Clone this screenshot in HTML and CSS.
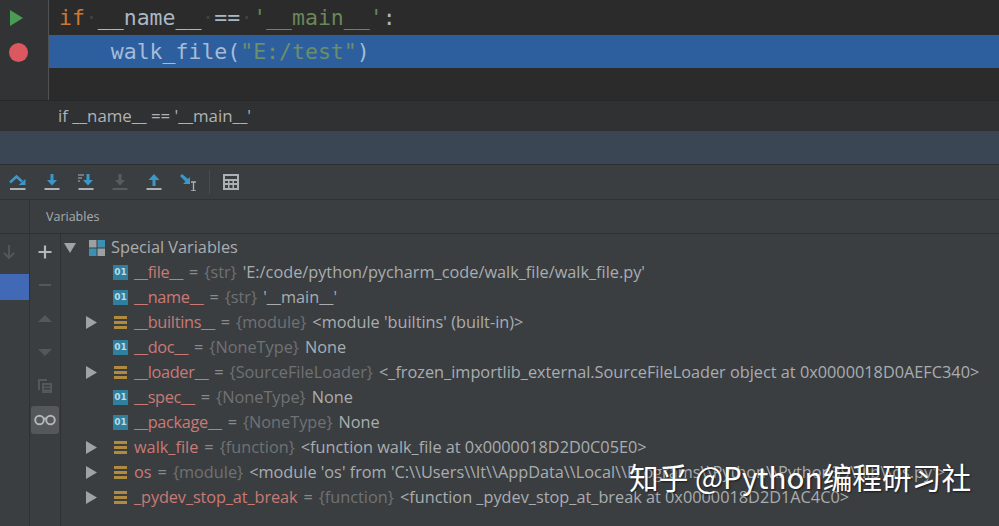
FILE: index.html
```html
<!DOCTYPE html>
<html lang="zh">
<head>
<meta charset="utf-8">
<title>PyCharm debugger</title>
<link rel="stylesheet" href="styles.css">
</head>
<body>
<div class="app">
  <section class="editor">
    <div class="gutter">
      <div class="gut-row"><svg width="16" height="18" viewBox="0 0 16 18"><path d="M1 1 L14 9 L1 17 Z" fill="#499c54"/></svg></div>
      <div class="gut-row"><span class="bp"></span></div>
    </div>
    <div class="code">
      <div class="line"><span class="kw">if</span><span class="ws">·</span>__name__<span class="ws">·</span>==<span class="ws">·</span><span class="str">'__main__'</span>:</div>
      <div class="line current">    walk_file(<span class="str2">"E:/test"</span>)</div>
    </div>
  </section>
  <div class="crumb">if __name__ == '__main__'</div>
  <div class="band"></div>
  <div class="toolbar">
    <svg class="tb" width="18" height="18" viewBox="0 0 18 18"><path d="M1 9.500 L7.500 3.500 L13 8.500" fill="none" stroke="#3b97c8" stroke-width="2.600"/><path d="M9.500 12 H16.500 V6 Z" fill="#3b97c8"/><rect x="1" y="15" width="15.500" height="2" fill="#aeb1b3"/></svg>
    <svg class="tb" width="18" height="18" viewBox="0 0 18 18"><path d="M7.500 1 H10.500 V7 H14 L9 12.500 L4 7 H7.500 Z" fill="#3b97c8"/><rect x="1.500" y="15" width="15" height="2" fill="#aeb1b3"/></svg>
    <svg class="tb" width="18" height="18" viewBox="0 0 18 18"><path d="M9.500 1 H12.500 V7 H16 L11 12.500 L6 7 H9.500 Z" fill="#3b97c8"/><path d="M1 2 H7 M1 5 H5 M1 8 H3" stroke="#aeb1b3" stroke-width="1.200"/><rect x="1.500" y="15" width="15" height="2" fill="#aeb1b3"/></svg>
    <svg class="tb" width="18" height="18" viewBox="0 0 18 18"><path d="M7.500 1 H10.500 V7 H14 L9 12.500 L4 7 H7.500 Z" fill="#595c5e"/><rect x="1.500" y="15" width="15" height="2" fill="#595c5e"/></svg>
    <svg class="tb" width="18" height="18" viewBox="0 0 18 18"><path d="M7.500 13 H10.500 V7 H14.500 L9 1 L3.500 7 H7.500 Z" fill="#3b97c8"/><rect x="1.500" y="15" width="15" height="2" fill="#aeb1b3"/></svg>
    <svg class="tb" width="18" height="18" viewBox="0 0 18 18"><path d="M1 3 L3 1 L9 6 L11 4 V11 H4 L6.500 8.500 Z" fill="#3b97c8"/><path d="M12 9 H17 M12 18 H17 M14.500 9 V18" stroke="#aeb1b3" stroke-width="1.300"/></svg>
    <span class="tb-sep"></span>
    <svg class="tb" width="16" height="16" viewBox="0 0 16 16"><path fill-rule="evenodd" d="M0 0 H16 V16 H0 Z M2 2 V5 H14 V2 Z M2 7 V9 H5 V7 Z M6.500 7 V9 H9.500 V7 Z M11 7 V9 H14 V7 Z M2 11 V14 H5 V11 Z M6.500 11 V14 H9.500 V11 Z M11 11 V14 H14 V11 Z" fill="#aeb1b3"/></svg>
  </div>
  <div class="tabs">
    <div class="tabs-left"></div>
    <div class="tab-title">Variables</div>
  </div>
  <div class="debug">
    <aside class="frames">
      <div class="frame-arrow"><svg width="14" height="16" viewBox="0 0 14 16"><path d="M7 1 V14 M2 9 L7 14 L12 9" fill="none" stroke="#55585a" stroke-width="1.800"/></svg></div>
      <div class="frame-sel"></div>
    </aside>
    <aside class="actions">
      <div class="act"><svg width="14" height="14" viewBox="0 0 14 14"><path d="M7 0.500 V13.500 M0.500 7 H13.500" stroke="#b4b7b9" stroke-width="2.200"/></svg></div>
      <div class="act"><svg width="14" height="14" viewBox="0 0 14 14"><path d="M1 7 H13" stroke="#55585a" stroke-width="2"/></svg></div>
      <div class="act"><svg width="14" height="10" viewBox="0 0 14 10"><path d="M7 1 L14 8 H0 Z" fill="#55585a"/></svg></div>
      <div class="act"><svg width="14" height="10" viewBox="0 0 14 10"><path d="M0 2 H14 L7 9 Z" fill="#55585a"/></svg></div>
      <div class="act"><svg width="16" height="16" viewBox="0 0 16 16"><path d="M1 1 H10 V3 H3 V12 H1 Z" fill="#55585a"/><path fill-rule="evenodd" d="M5 5 H15 V15 H5 Z M7 7 V8.500 H13 V7 Z M7 10 V11.500 H13 V10 Z" fill="#55585a"/></svg></div>
      <div class="act on"><svg width="22" height="12" viewBox="0 0 22 12"><circle cx="5.500" cy="6" r="4.300" fill="none" stroke="#b4b7b9" stroke-width="1.900"/><circle cx="16.500" cy="6" r="4.300" fill="none" stroke="#b4b7b9" stroke-width="1.900"/><path d="M9 4.500 H13" stroke="#b4b7b9" stroke-width="1.900"/></svg></div>
    </aside>
    <div class="tree">
      <div class="row top"><svg class="tw" width="12" height="12" viewBox="0 0 12 12"><path d="M0 1 H12 L6 11 Z" fill="#a0a3a5"/></svg><svg class="grid" width="16" height="16" viewBox="0 0 16 16"><rect width="7.500" height="7.500" fill="#9ba0a3"/><rect x="8.500" width="7.500" height="7.500" fill="#3d8fb4"/><rect y="8.500" width="7.500" height="7.500" fill="#3d8fb4"/><rect x="8.500" y="8.500" width="7.500" height="7.500" fill="#9ba0a3"/></svg><span class="val">Special Variables</span></div>
      <div class="row"><span class="no-tw"></span><span class="ic01">01</span><span class="nm dunder">__file__</span><span class="eq">=</span><span class="ty">{str}</span><span class="val">'E:/code/python/pycharm_code/walk_file/walk_file.py'</span></div>
      <div class="row"><span class="no-tw"></span><span class="ic01">01</span><span class="nm dunder">__name__</span><span class="eq">=</span><span class="ty">{str}</span><span class="val">'__main__'</span></div>
      <div class="row"><svg class="tw" width="11" height="13" viewBox="0 0 11 13"><path d="M0 0 L11 6.500 L0 13 Z" fill="#a0a3a5"/></svg><span class="icst"></span><span class="nm dunder">__builtins__</span><span class="eq">=</span><span class="ty">{module}</span><span class="val">&lt;module 'builtins' (built-in)&gt;</span></div>
      <div class="row"><span class="no-tw"></span><span class="ic01">01</span><span class="nm dunder">__doc__</span><span class="eq">=</span><span class="ty">{NoneType}</span><span class="val">None</span></div>
      <div class="row"><svg class="tw" width="11" height="13" viewBox="0 0 11 13"><path d="M0 0 L11 6.500 L0 13 Z" fill="#a0a3a5"/></svg><span class="icst"></span><span class="nm dunder">__loader__</span><span class="eq">=</span><span class="ty">{SourceFileLoader}</span><span class="val">&lt;_frozen_importlib_external.SourceFileLoader object at 0x0000018D0AEFC340&gt;</span></div>
      <div class="row"><span class="no-tw"></span><span class="ic01">01</span><span class="nm dunder">__spec__</span><span class="eq">=</span><span class="ty">{NoneType}</span><span class="val">None</span></div>
      <div class="row"><span class="no-tw"></span><span class="ic01">01</span><span class="nm dunder">__package__</span><span class="eq">=</span><span class="ty">{NoneType}</span><span class="val">None</span></div>
      <div class="row"><svg class="tw" width="11" height="13" viewBox="0 0 11 13"><path d="M0 0 L11 6.500 L0 13 Z" fill="#a0a3a5"/></svg><span class="icst"></span><span class="nm">walk_file</span><span class="eq">=</span><span class="ty">{function}</span><span class="val">&lt;function walk_file at 0x0000018D2D0C05E0&gt;</span></div>
      <div class="row"><svg class="tw" width="11" height="13" viewBox="0 0 11 13"><path d="M0 0 L11 6.500 L0 13 Z" fill="#a0a3a5"/></svg><span class="icst"></span><span class="nm">os</span><span class="eq">=</span><span class="ty">{module}</span><span class="val">&lt;module 'os' from 'C:\\Users\\lt\\AppData\\Local\\Programs\\Python\\Python39\\lib\\os.py'&gt;</span></div>
      <div class="row"><svg class="tw" width="11" height="13" viewBox="0 0 11 13"><path d="M0 0 L11 6.500 L0 13 Z" fill="#a0a3a5"/></svg><span class="icst"></span><span class="nm long">_pydev_stop_at_break</span><span class="eq">=</span><span class="ty">{function}</span><span class="val">&lt;function _pydev_stop_at_break at 0x0000018D2D1AC4C0&gt;</span></div>
    </div>
  </div>
  <div class="mark">知乎 @Python编程研习社</div>
</div>
</body>
</html>
```
FILE: styles.css
```css
* { box-sizing: border-box; }
html, body { margin: 0; padding: 0; }
body { width: 999px; height: 526px; overflow: hidden; background: #3b3e41; }
.app { position: relative; width: 999px; height: 526px; display: flex; flex-direction: column; overflow: hidden; }

.editor { height: 101px; display: flex; background: #2b2b2b; border-bottom: 1px solid #26282a; }
.gutter { width: 49px; background: #313335; border-right: 1px solid #505254; padding-top: 1px; }
.gut-row { height: 34px; display: flex; align-items: center; padding-left: 9px; }
.bp { width: 19px; height: 19px; border-radius: 50%; background: #db5860; }
.code { flex: 1; padding-top: 1px; }
.line { height: 34px; padding-left: 10px; font: 21.500px/34px "DejaVu Sans Mono", monospace; color: #a9b7c6; white-space: pre; }
.line.current { background: #2d5f9f; height: 33px; line-height: 34px; color: #a4bcd8; }
.kw { color: #cc7832; }
.ws { color: #3f4143; }
.str { color: #6a8759; }
.str2 { color: #6a8f6a; }

.crumb { height: 30px; background: #2f3133; color: #b0b3b5; padding-left: 58px; font: 16.850px/30px "Open Sans", sans-serif; white-space: pre; }
.band { height: 34px; background: #3a4654; border-bottom: 1px solid #2c2e30; }

.toolbar { height: 35px; display: flex; align-items: center; padding-left: 9px; gap: 16px; border-bottom: 1px solid #2f3133; }
.tb { flex: none; }
.tb-sep { width: 1px; height: 24px; background: #4a4d4f; margin-left: -4px; margin-right: -3px; }

.tabs { height: 34px; display: flex; border-bottom: 1px solid #2f3133; }
.tabs-left { width: 30px; border-right: 1px solid #2f3133; }
.tab-title { padding-left: 16px; color: #a9acae; font: 12.500px/33px "Open Sans", sans-serif; }

.debug { flex: 1; display: flex; }
.frames { width: 30px; border-right: 1px solid #2f3133; padding-top: 10px; }
.frame-arrow { height: 30px; padding-left: 2px; }
.frame-sel { width: 29px; height: 26px; background: #4169b5; }
.actions { width: 31px; border-right: 1px solid #2f3133; display: flex; flex-direction: column; align-items: center; padding-top: 1px; }
.act { width: 28px; height: 33.500px; display: flex; align-items: center; justify-content: center; flex: none; }
.act.on { background: #55585b; border-radius: 3px; height: 28px; margin-top: 3px; }

.tree { flex: 1; padding-top: 1px; }
.row { height: 25px; display: flex; align-items: center; padding-left: 25px; white-space: pre; font: 16.300px/25px "Open Sans", sans-serif; color: #a9adb0; }
.row.top { padding-left: 3px; }
.row.top .tw { margin-right: 13px; }
.row.top .grid { margin-right: 6px; }
.tw { flex: none; margin-right: 16px; }
.no-tw { width: 27px; flex: none; }
.ic01 { width: 15px; height: 15px; flex: none; background: #2f7f9f; color: #b9dbe6; font: bold 9px/15px "DejaVu Sans", sans-serif; text-align: center; margin-right: 6px; }
.icst { width: 13px; height: 14px; flex: none; margin-left: 1px; margin-right: 7px; background: repeating-linear-gradient(#b08a3e 0 3px, #3b3e41 3px 5px); }
.nm { color: #c97a75; }
.nm.dunder { letter-spacing: -.3px; }
.nm.long { letter-spacing: -.1px; }
.eq { color: #888b8d; margin: 0 6px; }
.ty { color: #6f7274; margin-right: 6px; }
.val { color: #a9adb0; }

.mark { position: absolute; left: 629px; top: 457px; color: #fff; font: 29.700px/40px "Noto Sans CJK SC", "Open Sans", sans-serif; text-shadow: 1px 1px 2px rgba(0,0,0,.6); white-space: pre; }
```
